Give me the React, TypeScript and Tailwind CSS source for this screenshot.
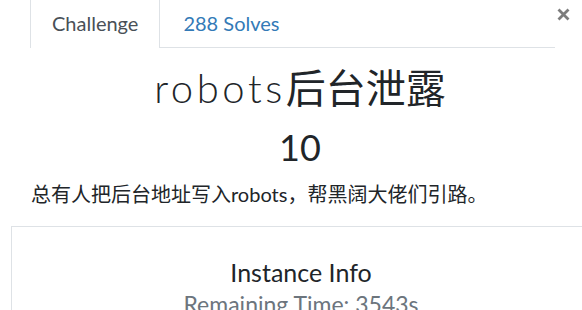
export default function App() {
  const sans = { fontFamily: 'Lato, "Noto Sans CJK SC", sans-serif' };

  return (
    <div className="relative h-[310px] w-[582px] overflow-hidden bg-white text-[#212529]" style={sans}>
      {/* close */}
      <button className="absolute left-[557px] top-[8px] flex h-[13px] w-[13px] items-center justify-center">
        <svg width="13" height="13" viewBox="0 0 13 13">
          <path d="M1.5 1.5 L11.5 11.5 M11.5 1.5 L1.5 11.5" stroke="#7d7d7d" strokeWidth="2.8" />
        </svg>
      </button>

      {/* tabs */}
      <ul className="ml-[30px] flex w-[525px] text-[20px]">
        <li className="flex h-[48px] items-center border-x border-[#dee2e6] px-[21px] pb-[3px] text-[#495057]">
          Challenge
        </li>
        <li className="flex h-[48px] flex-1 items-center border-b border-[#dee2e6] px-[23px] pb-[2px] text-[#337ab7]">
          288 Solves
        </li>
      </ul>

      <div className="mx-[30px] w-[540px]">
        <h2 className="mt-[16px] text-center text-[40px] leading-[1.2]">
          <span className="font-light tracking-[0.09em]">robots</span>
          后台泄露
        </h2>
        <h3 className="mt-[14px] text-center text-[36px] leading-[1.2]">10</h3>
        <p className="mt-[10px] pl-[1px] text-[20px] leading-[1.5]">
          总有人把后台地址写入robots，帮黑阔大佬们引路。
        </p>
      </div>

      {/* instance card */}
      <div className="ml-[11px] mt-[17px] w-[640px] border-l border-t border-[#dee2e6] pt-[30px]">
        <div className="ml-[19px] w-[540px] text-center">
          <h4 className="text-[25px] leading-[1.2]">Instance Info</h4>
          <p className="mt-[4px] text-[23px] leading-[1.2] text-[#6c757d]">Remaining Time: 3543s</p>
        </div>
      </div>
    </div>
  );
}
